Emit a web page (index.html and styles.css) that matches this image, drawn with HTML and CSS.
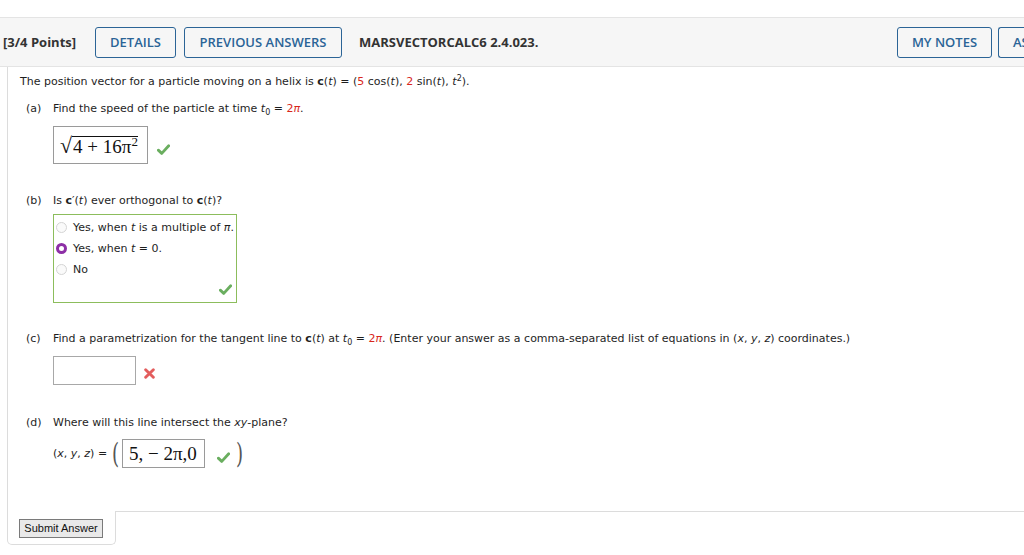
FILE: index.html
```html
<!DOCTYPE html>
<html>
<head>
<meta charset="utf-8">
<link rel="stylesheet" href="styles.css">
</head>
<body>
<div class="top-gap"></div>
<div class="header">
  <span class="points">[3/4 Points]</span>
  <span class="btn btn-details">DETAILS</span>
  <span class="btn btn-prev">PREVIOUS ANSWERS</span>
  <span class="code">MARSVECTORCALC6 2.4.023.</span>
  <span class="btn btn-notes">MY NOTES</span>
  <span class="btn btn-ask">ASK YOUR TEACHER</span>
</div>
<div class="panel">
  <p class="intro">The position vector for a particle moving on a helix is <b>c</b>(<i>t</i>) = (<span class="red">5</span> cos(<i>t</i>), <span class="red">2</span> sin(<i>t</i>), <i>t</i><sup>2</sup>).</p>

  <div class="part part-a">
    <div class="q"><span class="lbl">(a)</span><span>Find the speed of the particle at time <i>t</i><sub>0</sub> = <span class="red">2<i>π</i></span>.</span></div>
    <div class="ans-row">
      <div class="mathbox box-a"><span class="math"><span class="rad">√</span><span class="vinc">4 + 16π<sup>2</sup></span></span></div>
      <svg class="check" viewBox="0 0 12 10" width="13" height="11"><path d="M1.2 5.6 L4.4 8.6 L10.8 1.6" fill="none" stroke="#6aae5f" stroke-width="2.6" stroke-linecap="round" stroke-linejoin="round"/></svg>
    </div>
  </div>

  <div class="part part-b">
    <div class="q"><span class="lbl">(b)</span><span>Is <b>c</b>′(<i>t</i>) ever orthogonal to <b>c</b>(<i>t</i>)?</span></div>
    <div class="choices">
      <div class="opt"><span class="radio"></span><span>Yes, when <i>t</i> is a multiple of <i>π</i>.</span></div>
      <div class="opt"><span class="radio on"></span><span>Yes, when <i>t</i> = 0.</span></div>
      <div class="opt"><span class="radio"></span><span>No</span></div>
      <div class="choice-check"><svg viewBox="0 0 12 10" width="13" height="11"><path d="M1.2 5.6 L4.4 8.6 L10.8 1.6" fill="none" stroke="#6aae5f" stroke-width="2.6" stroke-linecap="round" stroke-linejoin="round"/></svg></div>
    </div>
  </div>

  <div class="part part-c">
    <div class="q"><span class="lbl">(c)</span><span>Find a parametrization for the tangent line to <b>c</b>(<i>t</i>) at <i>t</i><sub>0</sub> = <span class="red">2<i>π</i></span>. (Enter your answer as a comma-separated list of equations in (<i>x</i>, <i>y</i>, <i>z</i>) coordinates.)</span></div>
    <div class="ans-row">
      <div class="inputbox"></div>
      <svg class="cross" viewBox="0 0 10 10" width="11" height="11"><path d="M1.5 1.5 L8.5 8.5 M8.5 1.5 L1.5 8.5" fill="none" stroke="#e35d5d" stroke-width="2.6" stroke-linecap="round"/></svg>
    </div>
  </div>

  <div class="part part-d">
    <div class="q"><span class="lbl">(d)</span><span>Where will this line intersect the <i>xy</i>-plane?</span></div>
    <div class="ans-row row-d">
      <span class="xyz">(<i>x</i>, <i>y</i>, <i>z</i>) =</span>
      <span class="paren">(</span>
      <div class="mathbox box-d"><span class="math">5, − 2π,0</span></div>
      <svg class="check check-d" viewBox="0 0 12 10" width="13" height="11"><path d="M1.2 5.6 L4.4 8.6 L10.8 1.6" fill="none" stroke="#6aae5f" stroke-width="2.6" stroke-linecap="round" stroke-linejoin="round"/></svg>
      <span class="paren paren-r">)</span>
    </div>
  </div>
</div>
<div class="footer">
  <div class="tab"><span class="submit">Submit Answer</span></div>
  <div class="rest"></div>
</div>
</body>
</html>
```

FILE: styles.css
```css
html, body {
  margin: 0;
  padding: 0;
  background: #fff;
}
body {
  width: 1024px;
  overflow: hidden;
  font-family: "DejaVu Sans", Verdana, sans-serif;
  color: #1e1e1e;
}
.top-gap {
  height: 17px;
}
.header {
  height: 48px;
  background: #f6f6f6;
  border-top: 1px solid #e4e4e4;
  border-bottom: 1px solid #e4e4e4;
  display: flex;
  align-items: center;
  padding-left: 3px;
  font-family: "Open Sans", sans-serif;
  font-size: 13px;
  white-space: nowrap;
  overflow: hidden;
}
.points {
  font-weight: 700;
  color: #333;
  width: 75px;
  margin-right: 17px;
}
.btn {
  box-sizing: border-box;
  height: 31px;
  border: 1.5px solid #2b6496;
  border-radius: 3px;
  color: #2b6496;
  font-weight: 600;
  display: flex;
  align-items: center;
  justify-content: center;
  flex: none;
}
.btn-details {
  width: 81px;
  margin-right: 8px;
}
.btn-prev {
  width: 158px;
  margin-right: 17px;
}
.code {
  font-weight: 700;
  color: #333;
}
.btn-notes {
  margin-left: auto;
  width: 95px;
  margin-right: 6px;
}
.btn-ask {
  width: 26px;
  overflow: hidden;
  border-right: none;
  border-radius: 3px 0 0 3px;
  justify-content: flex-start;
  padding-left: 14px;
}

.panel {
  margin-left: 7px;
  border-left: 1px solid #dcdcdc;
  padding: 7px 0 43px 12px;
  font-size: 11px;
  line-height: 16px;
}
.intro {
  margin: 0;
}
.red {
  color: #d8271c;
}
sup, sub {
  font-size: 8px;
  line-height: 0;
}
sup { vertical-align: 4px; }
sub { vertical-align: -3px; }
.part {
  margin-top: 28px;
}
.part-a {
  margin-top: 11px;
}
.part-b {
  margin-top: 29px;
}
.part-d {
  margin-top: 30px;
}
.q {
  display: flex;
}
.lbl {
  width: 27px;
  margin-left: 6px;
  flex: none;
}
.ans-row {
  margin-left: 33px;
  display: flex;
  align-items: center;
}
.part-a .ans-row {
  margin-top: 9px;
}
.mathbox {
  box-sizing: border-box;
  border: 1px solid #9a9a9a;
  display: flex;
  align-items: center;
  font-family: "Liberation Serif", "DejaVu Serif", serif;
  color: #111;
}
.box-a {
  width: 95px;
  height: 38px;
  padding-left: 6px;
  padding-top: 2px;
  font-size: 19px;
}
.math {
  display: inline-flex;
  align-items: flex-end;
  white-space: nowrap;
}
.rad {
  font-size: 22px;
  line-height: 22px;
}
.vinc {
  border-top: 1px solid #111;
  line-height: 19px;
  padding-left: 1px;
  margin-bottom: 1px;
}
.vinc sup {
  font-size: 13px;
  vertical-align: 7px;
}
.check {
  margin-left: 9px;
  margin-top: 8px;
}
.choices {
  box-sizing: border-box;
  margin-left: 33px;
  margin-top: 5px;
  width: 184px;
  height: 89px;
  border: 1px solid #8cbd5c;
  padding-top: 2px;
  line-height: 21px;
}
.opt {
  display: flex;
  align-items: center;
  height: 21px;
}
.radio {
  box-sizing: border-box;
  width: 11px;
  height: 11px;
  border-radius: 50%;
  border: 1px solid #d4d4d4;
  background: #fafafa;
  margin-left: 2px;
  margin-right: 6px;
  flex: none;
}
.radio.on {
  border: 3.5px solid #8d2fa6;
  background: #fff;
}
.choice-check {
  display: flex;
  justify-content: flex-end;
  padding-right: 4px;
  padding-top: 4px;
}
.part-c .ans-row {
  margin-top: 9px;
}
.inputbox {
  box-sizing: border-box;
  width: 83px;
  height: 29px;
  border: 1px solid #a8a8a8;
}
.cross {
  margin-left: 8px;
  margin-top: 6px;
}
.row-d {
  margin-top: 8px;
  height: 29px;
}
.xyz {
  font-size: 11px;
}
.paren {
  font-family: "DejaVu Serif", serif;
  font-size: 28px;
  font-weight: 200;
  color: #555;
  margin-left: 3px;
  margin-right: 1px;
  line-height: 29px;
  transform: scaleX(0.65);
}
.paren-r {
  margin-left: 4px;
}
.check-d {
  margin-left: 12px;
}
.box-d {
  width: 83px;
  height: 29px;
  padding-left: 6px;
  font-size: 19px;
}

.footer {
  display: flex;
  height: 34px;
}
.tab {
  box-sizing: border-box;
  margin-left: 7px;
  width: 109px;
  height: 34px;
  border-left: 1px solid #dcdcdc;
  border-right: 1px solid #dcdcdc;
  border-bottom: 1px solid #dcdcdc;
  border-radius: 0 0 5px 5px;
  padding: 6px 0 0 11px;
}
.rest {
  flex: 1;
  border-top: 1px solid #dcdcdc;
}
.submit {
  box-sizing: border-box;
  display: inline-block;
  height: 19px;
  width: 84px;
  border: 1px solid #7a7a7a;
  background: #e9e9e9;
  font-family: "Liberation Sans", Arial, sans-serif;
  font-size: 11px;
  line-height: 17px;
  text-align: center;
  color: #111;
}
```
